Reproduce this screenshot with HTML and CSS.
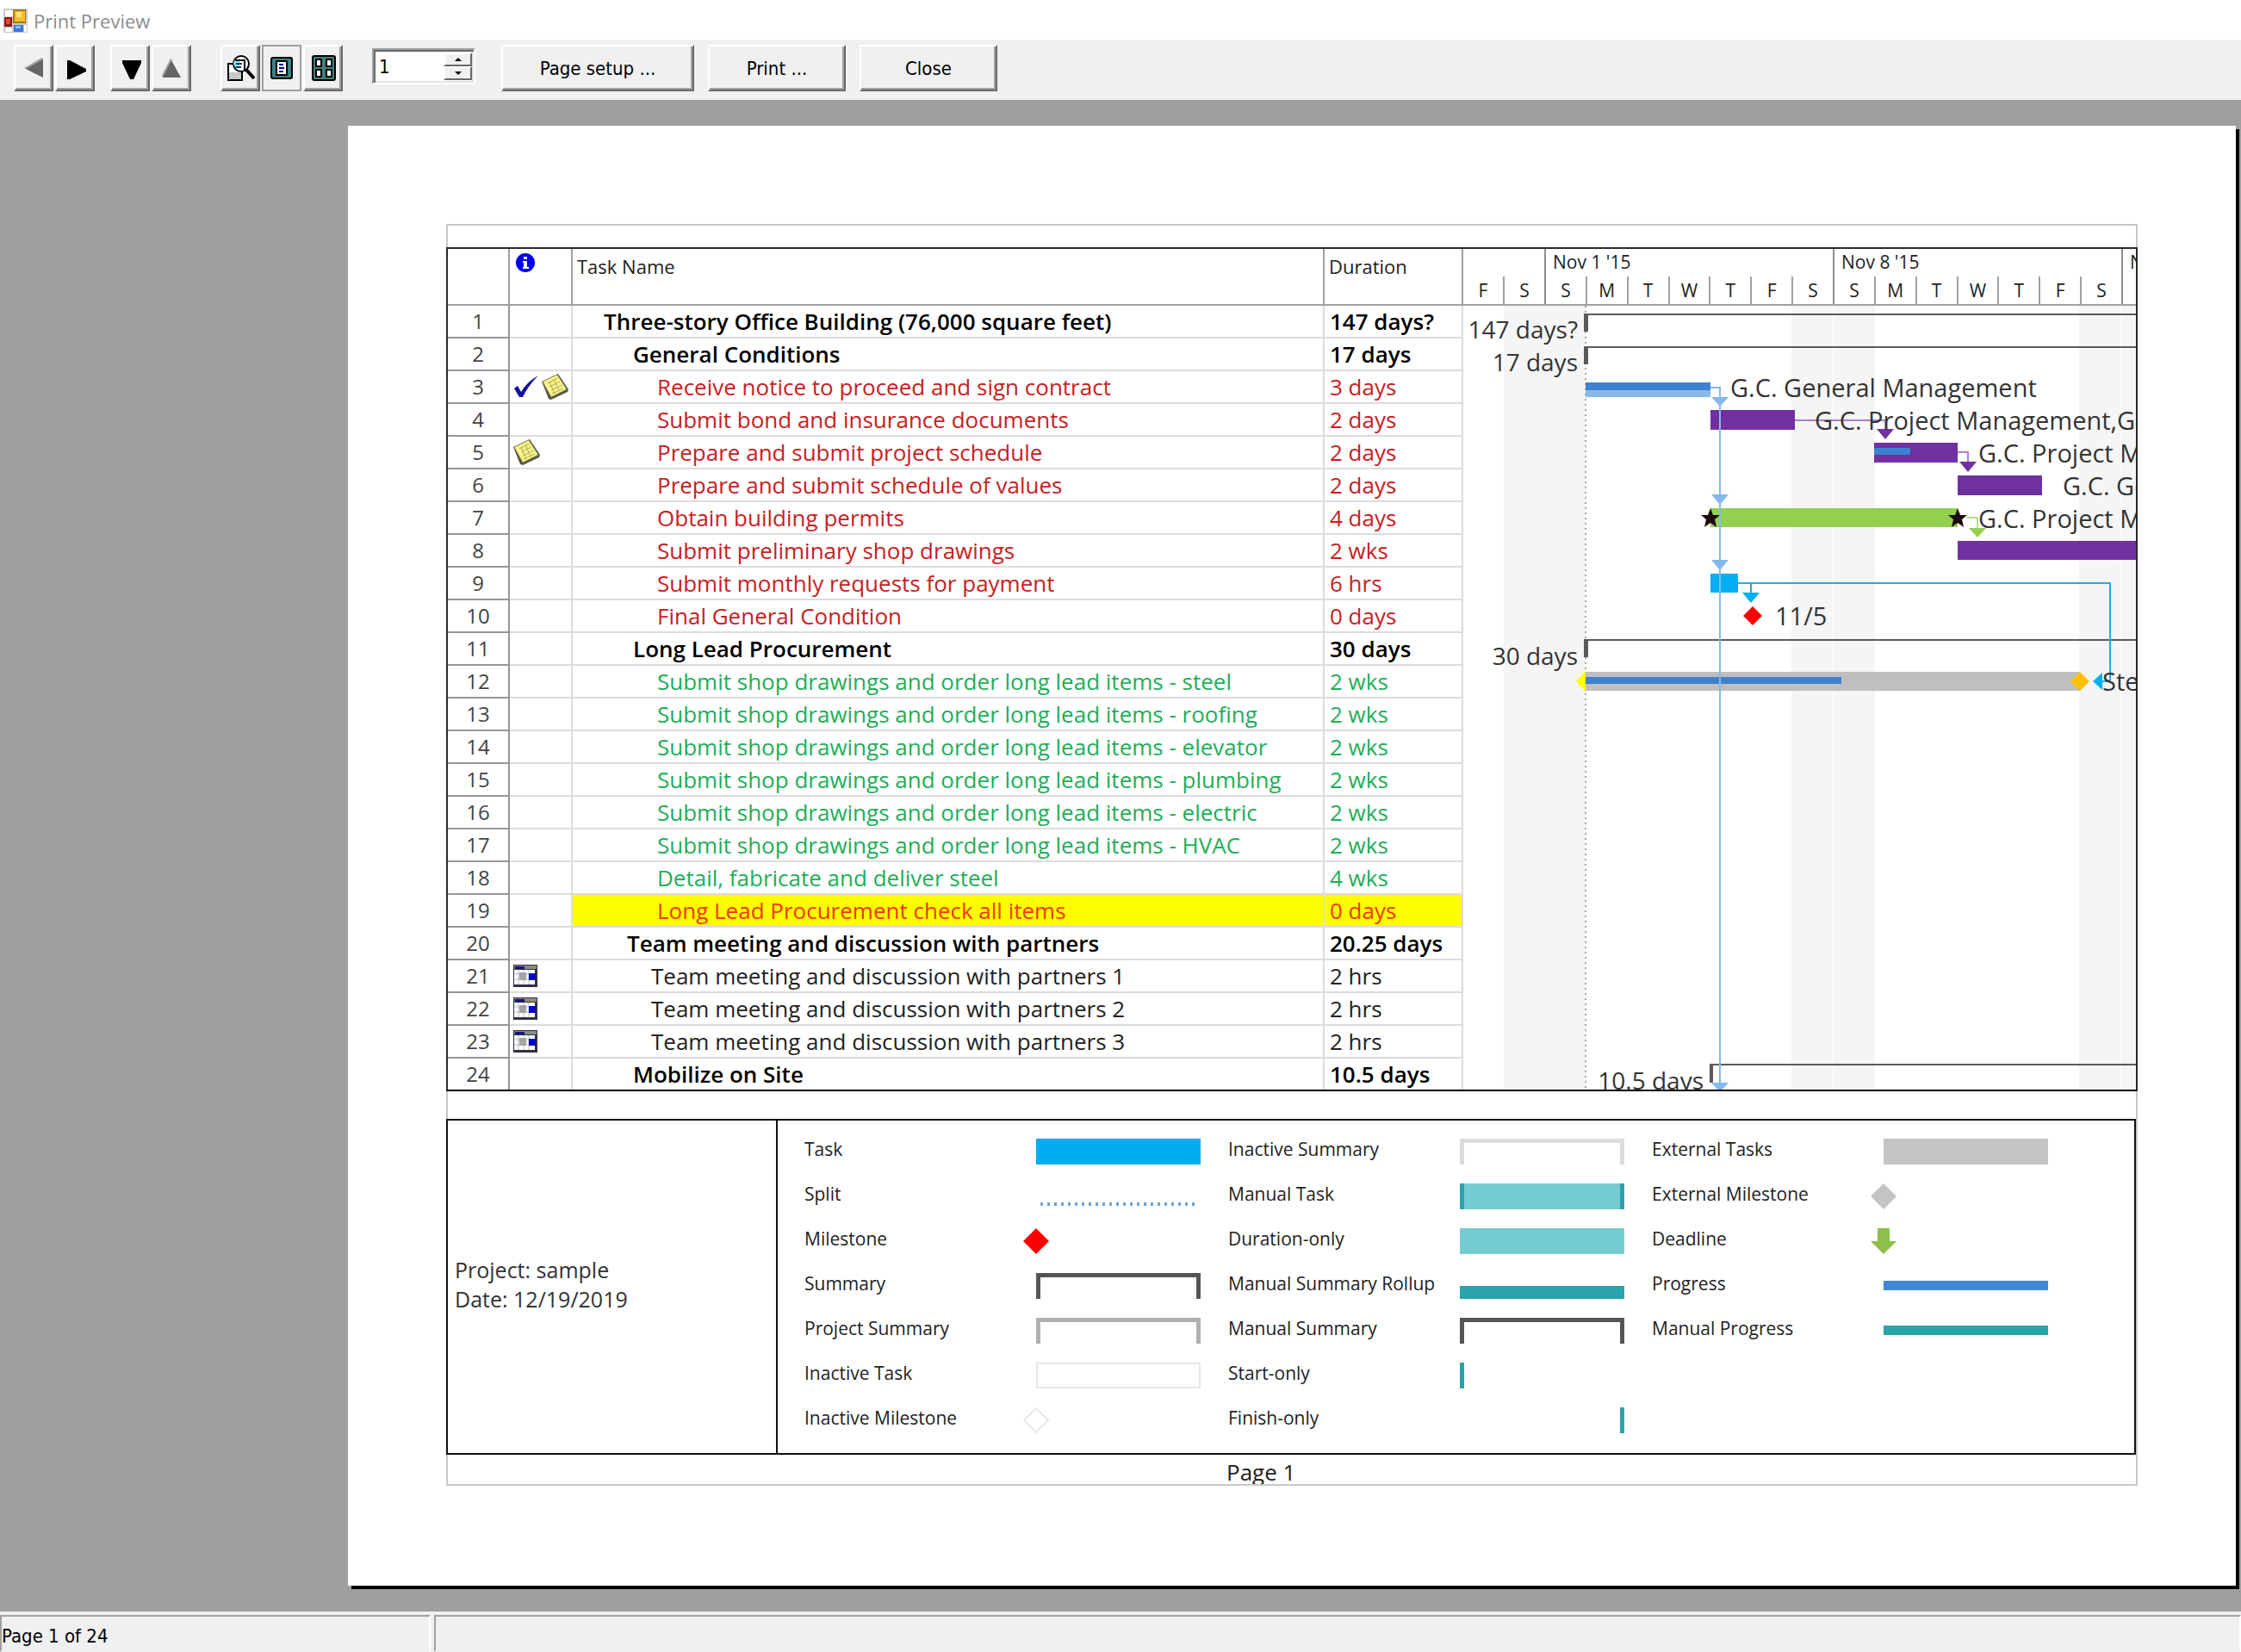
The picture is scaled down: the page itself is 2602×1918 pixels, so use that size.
FILE: index.html
```html
<!DOCTYPE html>
<html lang="en">
<head>
  <meta charset="UTF-8">
  <meta name="viewport" content="width=device-width, initial-scale=1.0">
  <title>Print Preview</title>
  <link rel="stylesheet" href="styles.css">
</head>
<body>
  <svg class="defs" width="0" height="0" aria-hidden="true">
    <symbol id="note" viewBox="0 0 31 30">
      <path d="M19 0 L31 18 L30 21 L11 30 L8 29 L0 9 Z" fill="#55553f"/>
      <path d="M18 1 L29 18 L11 27 L1 9 Z" fill="#f8f48c" stroke="#8c8c58" stroke-width="1"/>
      <path d="M7 11 L19 5 M9 15 L21 9 M11 19 L24 13 M12 23 L25 17 M9 9 L15 23 M14 6 L20 20" stroke="#b0ac58" stroke-width="1" fill="none"/>
    </symbol>
    <symbol id="check" viewBox="0 0 30 26">
      <path d="M1 15 L5 12 L9 19 Q16 7 29 0 Q17 12 11 25 L7 25 Z" fill="#10109a"/>
    </symbol>
    <symbol id="calendar" viewBox="0 0 28 26">
      <rect width="28" height="26" fill="#33333f"/>
      <rect x="1" y="1" width="26" height="4" fill="#8a8a8a"/>
      <rect x="2" y="2" width="11" height="3" fill="#15157a"/>
      <rect x="1" y="6" width="24" height="17" fill="#fff"/>
      <path d="M1 11 H25 M1 17 H25 M6 6 V23 M12 6 V23 M18 6 V23" stroke="#b9b9c4" stroke-width="1"/>
      <rect x="7" y="9" width="8" height="9" fill="#a5a5a5"/>
      <rect x="18" y="10" width="8" height="8" fill="#0000c8"/>
    </symbol>
  </svg>

  <header class="titlebar">
    <svg class="app-icon" viewBox="0 0 28 28" width="28" height="28">
      <rect x="0" y="0" width="28" height="28" fill="#c9c9c9"/>
      <rect x="2" y="2" width="9" height="7" fill="#fff"/>
      <rect x="11" y="1" width="15" height="16" fill="#a87c14"/>
      <rect x="13" y="3" width="12" height="12" fill="#f4bf2c"/>
      <rect x="15" y="4" width="6" height="6" fill="#ffe07a"/>
      <rect x="1" y="10" width="9" height="11" fill="#8f1a1a"/>
      <rect x="3" y="12" width="5" height="6" fill="#dc4a3e"/>
      <rect x="2" y="22" width="8" height="5" fill="#fff"/>
      <rect x="12" y="19" width="11" height="8" fill="#3b78dc"/>
      <rect x="14" y="20" width="6" height="3" fill="#8cb8f7"/>
      <rect x="24" y="19" width="3" height="8" fill="#fff"/>
    </svg>
    <h1>Print Preview</h1>
  </header>

  <div class="toolbar">
    <div class="group">
      <button class="tool" aria-label="Previous page" disabled>
        <svg viewBox="0 0 42 50"><path d="M10 25 L30 13 L32 14 L32 36 Z" fill="#a6a6a6"/><path d="M12 26 L32 15 V36 Z" fill="#666"/></svg>
      </button>
      <button class="tool" aria-label="Next page">
        <svg viewBox="0 0 42 50"><path d="M12 16 H15 L34 26 V29 L15 38 H12 Z"/></svg>
      </button>
    </div>
    <div class="group">
      <button class="tool" aria-label="Page down">
        <svg viewBox="0 0 42 50"><path d="M12 16 H34 V19 L25 38 H21 L12 19 Z"/></svg>
      </button>
      <button class="tool" aria-label="Page up" disabled>
        <svg viewBox="0 0 42 50"><path d="M20 14 L22 15 L12 35 H10 V33 Z" fill="#a6a6a6"/><path d="M21 16 L32 36 H11 Z" fill="#666"/></svg>
      </button>
    </div>
    <div class="group">
      <button class="tool" aria-label="Zoom">
        <svg viewBox="0 0 42 50">
          <path d="M7 20 H23 V39 H7 Z" fill="#fff" stroke="#000" stroke-width="2"/>
          <path d="M8 30 H22 V38 H8 Z" fill="#c8c8c8"/>
          <circle cx="22" cy="20" r="9" fill="#fff" stroke="#000" stroke-width="2"/>
          <path d="M14 16 H20 V24 H15 L13 20 Z" fill="#7fe9ef"/>
          <path d="M15 16 H26 V27" fill="none" stroke="#000" stroke-width="2"/>
          <path d="M16 20 H23 M16 24 H22" stroke="#103a60" stroke-width="2"/>
          <path d="M28 27 L37 37" stroke="#000" stroke-width="4"/>
        </svg>
      </button>
      <button class="tool pressed" aria-label="One page">
        <svg viewBox="0 0 42 50">
          <rect x="9" y="13" width="24" height="24" rx="2" fill="#3f8080" stroke="#000" stroke-width="2"/>
          <rect x="15" y="17" width="12" height="16" fill="#fff" stroke="#000" stroke-width="2"/>
          <path d="M18 21 H23 M18 25 H24 M18 29 H23" stroke="#000080" stroke-width="2"/>
        </svg>
      </button>
      <button class="tool" aria-label="Multiple pages">
        <svg viewBox="0 0 42 50">
          <rect x="9" y="11" width="26" height="28" rx="2" fill="#3f8080" stroke="#000" stroke-width="2"/>
          <g fill="#fff" stroke="#000" stroke-width="2">
            <rect x="13" y="15" width="6" height="8"/><rect x="25" y="15" width="6" height="8"/>
            <rect x="13" y="27" width="6" height="8"/><rect x="25" y="27" width="6" height="8"/>
          </g>
        </svg>
      </button>
    </div>
    <div class="spinner">
      <input type="text" value="1" aria-label="Page number">
      <div class="spin-buttons">
        <button aria-label="Increase"><svg viewBox="0 0 8 4"><path d="M4 0 L8 4 H0 Z"/></svg></button>
        <button aria-label="Decrease"><svg viewBox="0 0 8 4"><path d="M4 4 L8 0 H0 Z"/></svg></button>
      </div>
    </div>
    <div class="actions">
      <button class="action wide">Page setup ...</button>
      <button class="action">Print ...</button>
      <button class="action">Close</button>
    </div>
  </div>

  <main class="preview">
    <div class="sheet">
      <div class="frame">
        <div class="plan">
          <table class="tasks">
            <thead>
              <tr>
                <th class="id"></th>
                <th class="ind"><svg class="info" viewBox="0 0 22 22" width="22" height="22"><circle cx="11" cy="11" r="11" fill="#00e"/><path d="M9 4 H13 V7 H9 Z M8 9 H13 V16 H15 V18 H8 V16 H9 V11 H8 Z" fill="#fff"/></svg></th>
                <th>Task Name</th>
                <th class="dur">Duration</th>
              </tr>
            </thead>
            <tbody>
              <tr class="summary"><td>1</td><td></td><td class="l1">Three-story Office Building (76,000 square feet)</td><td>147 days?</td></tr>
              <tr class="summary"><td>2</td><td></td><td class="l2">General Conditions</td><td>17 days</td></tr>
              <tr class="red"><td>3</td><td><div class="marks"><svg width="30" height="26"><use href="#check"/></svg><svg width="31" height="30"><use href="#note"/></svg></div></td><td class="l3">Receive notice to proceed and sign contract</td><td>3 days</td></tr>
              <tr class="red"><td>4</td><td></td><td class="l3">Submit bond and insurance documents</td><td>2 days</td></tr>
              <tr class="red"><td>5</td><td><div class="marks"><svg width="31" height="30"><use href="#note"/></svg></div></td><td class="l3">Prepare and submit project schedule</td><td>2 days</td></tr>
              <tr class="red"><td>6</td><td></td><td class="l3">Prepare and submit schedule of values</td><td>2 days</td></tr>
              <tr class="red"><td>7</td><td></td><td class="l3">Obtain building permits</td><td>4 days</td></tr>
              <tr class="red"><td>8</td><td></td><td class="l3">Submit preliminary shop drawings</td><td>2 wks</td></tr>
              <tr class="red"><td>9</td><td></td><td class="l3">Submit monthly requests for payment</td><td>6 hrs</td></tr>
              <tr class="red"><td>10</td><td></td><td class="l3">Final General Condition</td><td>0 days</td></tr>
              <tr class="summary"><td>11</td><td></td><td class="l2">Long Lead Procurement</td><td>30 days</td></tr>
              <tr class="green"><td>12</td><td></td><td class="l3">Submit shop drawings and order long lead items - steel</td><td>2 wks</td></tr>
              <tr class="green"><td>13</td><td></td><td class="l3">Submit shop drawings and order long lead items - roofing</td><td>2 wks</td></tr>
              <tr class="green"><td>14</td><td></td><td class="l3">Submit shop drawings and order long lead items - elevator</td><td>2 wks</td></tr>
              <tr class="green"><td>15</td><td></td><td class="l3">Submit shop drawings and order long lead items - plumbing</td><td>2 wks</td></tr>
              <tr class="green"><td>16</td><td></td><td class="l3">Submit shop drawings and order long lead items - electric</td><td>2 wks</td></tr>
              <tr class="green"><td>17</td><td></td><td class="l3">Submit shop drawings and order long lead items - HVAC</td><td>2 wks</td></tr>
              <tr class="green"><td>18</td><td></td><td class="l3">Detail, fabricate and deliver steel</td><td>4 wks</td></tr>
              <tr class="marked"><td>19</td><td></td><td class="l3">Long Lead Procurement check all items</td><td>0 days</td></tr>
              <tr class="summary"><td>20</td><td></td><td class="l2b">Team meeting and discussion with partners</td><td>20.25 days</td></tr>
              <tr><td>21</td><td><div class="marks"><svg width="28" height="26"><use href="#calendar"/></svg></div></td><td class="l3b">Team meeting and discussion with partners 1</td><td>2 hrs</td></tr>
              <tr><td>22</td><td><div class="marks"><svg width="28" height="26"><use href="#calendar"/></svg></div></td><td class="l3b">Team meeting and discussion with partners 2</td><td>2 hrs</td></tr>
              <tr><td>23</td><td><div class="marks"><svg width="28" height="26"><use href="#calendar"/></svg></div></td><td class="l3b">Team meeting and discussion with partners 3</td><td>2 hrs</td></tr>
              <tr class="summary"><td>24</td><td></td><td class="l2">Mobilize on Site</td><td>10.5 days</td></tr>
            </tbody>
          </table>

          <div class="chart">
            <div class="timescale">
              <div class="week partial">
                <div class="week-name"></div>
                <div class="days"><span>F</span><span>S</span></div>
              </div>
              <div class="week">
                <div class="week-name">Nov 1 '15</div>
                <div class="days"><span>S</span><span>M</span><span>T</span><span>W</span><span>T</span><span>F</span><span>S</span></div>
              </div>
              <div class="week">
                <div class="week-name">Nov 8 '15</div>
                <div class="days"><span>S</span><span>M</span><span>T</span><span>W</span><span>T</span><span>F</span><span>S</span></div>
              </div>
              <div class="week">
                <div class="week-name">Nov 15 '15</div>
                <div class="days"></div>
              </div>
            </div>
            <svg class="bars" viewBox="-1 2 781 910" width="781" height="910">
              <!-- weekends -->
              <g fill="#f5f5f5">
                <rect x="46" y="0" width="95" height="912"/>
                <rect x="380" y="0" width="48" height="912"/><rect x="429" y="0" width="48" height="912"/>
                <rect x="714" y="0" width="48" height="912"/><rect x="763" y="0" width="20" height="912"/>
              </g>
              <path d="M141 2 V912" stroke="#aaa" stroke-width="2" stroke-dasharray="2 4"/>

              <!-- summaries -->
              <g fill="#5a5a5a">
                <rect x="139" y="11" width="642" height="2"/><rect x="139" y="11" width="5" height="21"/>
                <rect x="139" y="49" width="642" height="2"/><rect x="139" y="49" width="5" height="21"/>
                <rect x="139" y="389" width="642" height="2"/><rect x="139" y="389" width="5" height="21"/>
                <rect x="285" y="882" width="496" height="2"/><rect x="285" y="882" width="4" height="22"/>
              </g>

              <!-- task bars -->
              <rect x="141" y="91" width="145" height="17" fill="#8ab8ea"/>
              <rect x="141" y="91" width="145" height="9" fill="#3c82d0"/>
              <g fill="#7030a0">
                <rect x="286" y="123" width="98" height="23"/>
                <rect x="476" y="161" width="97" height="23"/>
                <rect x="573" y="199" width="98" height="23"/>
                <rect x="573" y="275" width="210" height="22"/>
              </g>
              <rect x="476" y="167" width="42" height="8" fill="#3c82d0"/>
              <rect x="286" y="237" width="287" height="22" fill="#92d050"/>
              <rect x="286" y="313" width="32" height="22" fill="#00b0f0"/>
              <path d="M130 438 L141 426 L152 438 L141 450 Z" fill="#ffff00"/>
              <rect x="141" y="427" width="574" height="22" fill="#bfbfbf"/>
              <rect x="141" y="433" width="297" height="8" fill="#3c82d0"/>
              <path d="M704 438 L715 427 L726 438 L715 449 Z" fill="#ffc000"/>
              <path d="M324 362 L335 351 L346 362 L335 373 Z" fill="#f00"/>

              <!-- links -->
              <g fill="none" stroke-width="2">
                <path d="M286 97 H297 V912" stroke="#85b8ec"/>
                <path d="M384 135 H489 V147" stroke="#a97fcb"/>
                <path d="M573 172 H585 V184" stroke="#a97fcb"/>
                <path d="M583 248 H596 V262" stroke="#b5e08a"/>
                <path d="M318 324 H750 V438 H740 M333 324 V336" stroke="#2aa9de"/>
              </g>
              <path d="M287 108 H307 L297 119 Z M287 221 H307 L297 233 Z M287 297 H307 L297 309 Z M287 904 H307 L297 915 Z" fill="#85b8ec"/>
              <path d="M479 145 H499 L489 157 Z M575 183 H595 L585 195 Z" fill="#7030a0"/>
              <path d="M586 260 H606 L596 271 Z" fill="#92d050"/>
              <path d="M323 335 H343 L333 347 Z M730 438 L741 428 V448 Z" fill="#00b0f0"/>
              <g fill="#1c0a0a">
                <path id="star" d="M286 237 L289 245 L297 245 L291 250 L293 259 L286 254 L279 259 L281 250 L275 245 L283 245 Z"/>
                <use href="#star" x="287"/>
              </g>

              <g class="work">
                <text x="132" y="40">147 days?</text>
                <text x="132" y="78">17 days</text>
                <text x="132" y="419">30 days</text>
                <text x="278" y="912">10.5 days</text>
              </g>
              <g class="resource">
                <text x="309" y="108">G.C. General Management</text>
                <text x="407" y="146">G.C. Project Management,G.C. General Management</text>
                <text x="597" y="184">G.C. Project Management</text>
                <text x="695" y="222">G.C. General Management</text>
                <text x="597" y="260">G.C. Project Management</text>
                <text x="361" y="373">11/5</text>
                <text x="741" y="449">Steel Erection</text>
              </g>
            </svg>
          </div>
        </div>

        <div class="legend">
          <div class="project">Project: sample<br>Date: 12/19/2019</div>
          <div class="keys">
            <div class="key"><span>Task</span><i class="bar blue"></i></div>
            <div class="key"><span>Split</span><i class="split"></i></div>
            <div class="key"><span>Milestone</span><svg class="point" viewBox="0 0 30 30"><path d="M15 0 L30 15 L15 30 L0 15 Z" fill="#f00"/></svg></div>
            <div class="key"><span>Summary</span><i class="bracket dark"></i></div>
            <div class="key"><span>Project Summary</span><i class="bracket mid"></i></div>
            <div class="key"><span>Inactive Task</span><i class="bar outline"></i></div>
            <div class="key"><span>Inactive Milestone</span><svg class="point" viewBox="0 0 30 30"><path d="M15 1 L29 15 L15 29 L1 15 Z" fill="#fff" stroke="#e8e8e8" stroke-width="2"/></svg></div>

            <div class="key"><span>Inactive Summary</span><i class="bracket light"></i></div>
            <div class="key"><span>Manual Task</span><i class="bar teal capped"></i></div>
            <div class="key"><span>Duration-only</span><i class="bar teal"></i></div>
            <div class="key"><span>Manual Summary Rollup</span><i class="rollup"></i></div>
            <div class="key"><span>Manual Summary</span><i class="bracket dark"></i></div>
            <div class="key"><span>Start-only</span><i class="bar start"></i></div>
            <div class="key"><span>Finish-only</span><i class="bar finish"></i></div>

            <div class="key"><span>External Tasks</span><i class="bar gray"></i></div>
            <div class="key"><span>External Milestone</span><svg class="point" viewBox="0 0 30 30"><path d="M15 0 L30 15 L15 30 L0 15 Z" fill="#c4c4c4"/></svg></div>
            <div class="key"><span>Deadline</span><svg class="point" viewBox="0 0 30 30"><path d="M8 0 H22 V15 H30 L15 30 L0 15 H8 Z" fill="#8cc04a"/></svg></div>
            <div class="key"><span>Progress</span><i class="line progress"></i></div>
            <div class="key"><span>Manual Progress</span><i class="line manual"></i></div>
          </div>
        </div>

        <div class="page-number">Page 1</div>
      </div>
    </div>
  </main>

  <footer class="status">
    <div class="panel first">Page 1 of 24</div>
    <div class="panel"></div>
  </footer>
</body>
</html>
```
FILE: styles.css
```css
* {
  box-sizing: border-box;
}

body {
  margin: 0;
  min-height: 100vh;
  display: flex;
  flex-direction: column;
  background-color: #9f9f9f;
  color: #222;
  font-family: "Open Sans", "Noto Sans", sans-serif;
}

.defs {
  position: absolute;
}

/* title bar */
.titlebar {
  height: 46px;
  display: flex;
  align-items: center;
  gap: 7px;
  padding: 2px 4px 0;
  background-color: #fff;
}

.titlebar h1 {
  margin: 0;
  font-size: 22px;
  font-weight: 400;
  color: #8c8c8c;
}

/* toolbar */
.toolbar {
  height: 70px;
  display: flex;
  align-items: flex-start;
  padding: 6px 16px 0;
  background-color: #f0f0f0;
}

.group {
  display: flex;
  gap: 2px;
  margin-right: 18px;
}

.group:nth-child(2),
.group:nth-child(3) {
  margin-right: 34px;
}

button {
  padding: 0;
  background-color: #f0f0f0;
  border: 2px solid;
  border-color: #fff #696969 #696969 #fff;
  box-shadow: inset -2px -2px 0 #a0a0a0;
  color: #000;
}

.tool {
  width: 46px;
  height: 54px;
}

.tool svg {
  display: block;
  width: 42px;
  height: 50px;
}

.tool.pressed {
  border-color: #a0a0a0;
  box-shadow: none;
}

.spinner {
  display: flex;
  width: 120px;
  height: 42px;
  margin: 4px 30px 0 0;
  background-color: #fff;
  border: 2px solid;
  border-color: #a0a0a0 #fff #fff #a0a0a0;
  box-shadow: inset 2px 2px 0 #696969, inset -2px -2px 0 #e3e3e3;
  padding: 3px 2px;
}

.spinner input {
  flex: 1;
  min-width: 0;
  padding: 0 4px;
  border: none;
  background: none;
  font-family: "DejaVu Sans Condensed", "DejaVu Sans", sans-serif;
  font-size: 22px;
}

.spin-buttons {
  display: flex;
  flex-direction: column;
  width: 33px;
}

.spin-buttons button {
  flex: 1;
  display: flex;
  align-items: center;
  justify-content: center;
  box-shadow: none;
}

.spin-buttons svg {
  width: 8px;
  height: 4px;
}

.actions {
  display: flex;
  gap: 16px;
}

.action {
  width: 160px;
  height: 54px;
  font-family: "DejaVu Sans Condensed", "DejaVu Sans", sans-serif;
  font-size: 22px;
}

.action.wide {
  width: 224px;
}

/* paper */
.preview {
  flex: 1;
  padding: 30px 6px 30px 404px;
}

.sheet {
  padding: 114px 114px 116px;
  background-color: #fff;
  box-shadow: 4px 4px 0 #000;
}

.frame {
  border: 2px solid #c8c8c8;
  padding-top: 25px;
}

.plan {
  display: flex;
  margin: 0 -2px 32px;
  border: 2px solid #2b2b2b;
  border-bottom-color: #000;
}

.tasks {
  flex: 1;
  table-layout: fixed;
  width: 100%;
  border-spacing: 0;
  font-size: 26px;
  line-height: 36px;
}

.tasks th,
.tasks td {
  padding: 0 0 0 6px;
  border-right: 2px solid #dcdcdc;
  border-bottom: 2px solid #dcdcdc;
  white-space: nowrap;
}

.tasks th {
  height: 66px;
  padding-top: 5px;
  padding-left: 5px;
  border-color: #a0a0a0;
  font-size: 22px;
  font-weight: 400;
  line-height: 30px;
  text-align: left;
  vertical-align: top;
}

.tasks td {
  height: 38px;
}

.tasks .id {
  width: 72px;
}

.tasks .ind {
  width: 73px;
  padding-left: 7px;
}

.tasks .dur {
  width: 161px;
}

.tasks .info {
  display: block;
}

.tasks td:nth-child(1) {
  padding-left: 0;
  border-color: #959595;
  color: #444;
  font-size: 24px;
  text-align: center;
}

.tasks td:nth-child(2) {
  padding: 0 0 0 4px;
}

.tasks tr:last-child td {
  height: 36px;
  border-bottom: none;
}

.marks {
  display: flex;
  gap: 3px;
  align-items: center;
}

.tasks .l1 { padding-left: 36px; }
.tasks .l2 { padding-left: 70px; }
.tasks .l2b { padding-left: 63px; }
.tasks .l3 { padding-left: 98px; }
.tasks .l3b { padding-left: 91px; }

.summary td:nth-child(n+3) {
  color: #000;
  font-weight: 600;
}

.red td:nth-child(n+3) {
  color: #c8201f;
}

.green td:nth-child(n+3) {
  color: #1eae58;
}

.marked td:nth-child(n+3) {
  background-color: #ff0;
  color: #f03800;
}

/* gantt chart */
.chart {
  flex: none;
  width: 781px;
  overflow: hidden;
}

.timescale {
  display: flex;
  height: 66px;
  border-bottom: 2px solid #a0a0a0;
  font-size: 21px;
}

.week {
  flex: none;
  width: 335px;
  border-left: 2px solid #8f8f8f;
}

.week.partial {
  width: 94px;
  border-left: none;
}

.week-name {
  height: 32px;
  padding-left: 8px;
  line-height: 30px;
  white-space: nowrap;
}

.days {
  display: flex;
  height: 32px;
  line-height: 32px;
}

.days span {
  flex: 1;
  border-left: 2px solid #a0a0a0;
  text-align: center;
}

.days span:first-child {
  border-left: none;
}

.bars {
  display: block;
}

.work {
  font-size: 28px;
  fill: #333;
  text-anchor: end;
}

.resource {
  font-size: 29px;
  fill: #333;
}

/* legend */
.legend {
  display: flex;
  margin: 0 0 0 -2px;
  border: 2px solid #111;
}

.project {
  display: flex;
  align-items: center;
  width: 383px;
  padding: 0 0 6px 8px;
  border-right: 2px solid #111;
  color: #333;
  font-size: 25px;
  line-height: 34px;
}

.keys {
  flex: 1;
  display: grid;
  grid-auto-flow: column;
  grid-template-rows: repeat(7, 30px);
  grid-template-columns: repeat(3, 492px);
  row-gap: 22px;
  padding: 21px 0 23px 31px;
}

.key {
  display: flex;
  font-size: 21px;
  line-height: 24px;
}

.key span {
  width: 269px;
}

.key i {
  width: 191px;
  height: 30px;
}

.point {
  width: 30px;
  height: 30px;
  margin-left: -15px;
}

.blue { background-color: #00aeef; }
.teal { background-color: #75cbd2; }
.gray { background-color: #c4c4c4; }

.capped {
  border: solid #2ba3ab;
  border-width: 0 5px;
}

.outline {
  border: 2px solid #e6e6e6;
}

.start {
  border-left: 5px solid #2ba3ab;
}

.finish {
  border-right: 5px solid #2ba3ab;
}

.bracket {
  border: 5px solid;
  border-bottom: none;
}

.dark { border-color: #555; }
.mid { border-color: #b0b0b0; }
.light { border-color: #dcdcdc; }

.key .split {
  width: 181px;
  height: 4px;
  margin: 22px 0 0 5px;
  background: repeating-linear-gradient(90deg, #6fa3d8 0 3px, #fff 3px 8px);
}

.key .rollup {
  height: 15px;
  margin-top: 15px;
  background-color: #2ba3ab;
}

.key .line {
  height: 11px;
  margin-top: 9px;
}

.progress { background-color: #4087d4; }
.manual { background-color: #2ba3ab; }

.page-number {
  height: 34px;
  padding-left: 904px;
  overflow: hidden;
  font-size: 26px;
  line-height: 40px;
}

/* status bar */
.status {
  display: flex;
  gap: 4px;
  height: 47px;
  padding-top: 4px;
  background-color: #f0f0f0;
}

.panel {
  flex: 1;
  border: 2px solid;
  border-color: #a0a0a0 #fff #f0f0f0 #a0a0a0;
  color: #000;
  font-family: "DejaVu Sans Condensed", "DejaVu Sans", sans-serif;
  font-size: 22px;
  line-height: 46px;
}

.panel.first {
  flex: none;
  width: 500px;
}
```
